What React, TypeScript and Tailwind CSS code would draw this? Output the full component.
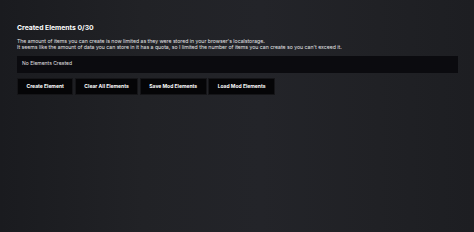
import React from "react";

const buttons = ["Create Element", "Clear All Elements", "Save Mod Elements", "Load Mod Elements"];

const App = () => {
  return (
    <div
      className="w-[474px] h-[232px] overflow-hidden bg-[linear-gradient(90deg,#1a1b1f_0%,#212226_30%,#232429_55%,#202125_80%,#1d1e22_100%)] text-white"
      style={{ fontFamily: "Inter, 'Liberation Sans', sans-serif" }}
    >
      <div className="pl-[17px] pr-[16px] pt-[22.5px]">
        <h1 className="text-[6.8px] font-bold leading-[9px] text-white">Created Elements 0/30</h1>

        <div className="mt-[6px] text-[5.15px] leading-[6.3px] text-[#e4e4e6]">
          <p>The amount of items you can create is now limited as they were stored in your browser's localstorage.</p>
          <p>It seems like the amount of data you can store in it has a quota, so I limited the number of items you can create so you can't exceed it.</p>
        </div>

        {/* liste des elements */}
        <div className="mt-[5.5px] h-[17px] w-[441px] bg-[#0b0b0f] flex items-center pl-[5px] text-[5px] text-[#e0e0e2]">
          No Elements Created
        </div>

        <div className="mt-[5.5px] flex gap-[1.5px]">
          {buttons.map((label) => (
            <button
              key={label}
              className="h-[17px] px-[8.5px] bg-[#050507] border border-[#151518] text-[5px] font-bold text-white"
            >
              {label}
            </button>
          ))}
        </div>
      </div>
    </div>
  );
};

export default App;
